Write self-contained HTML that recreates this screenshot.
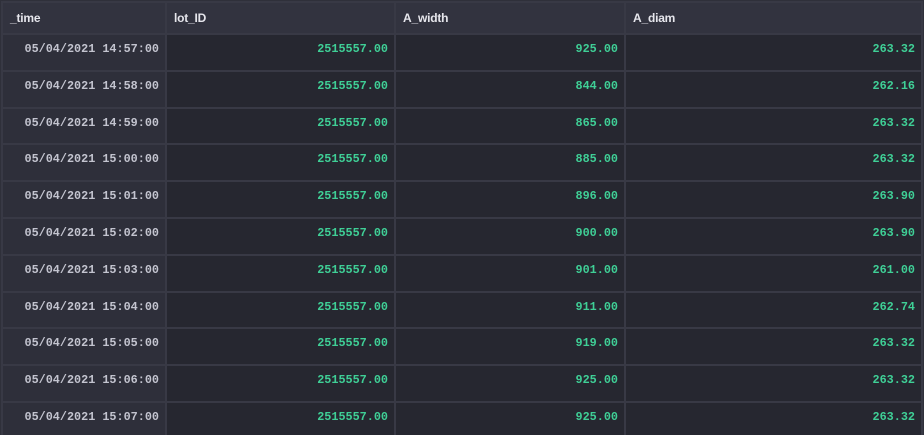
<!DOCTYPE html>
<html><head><style>
body{margin:0;background:#2f303a;width:924px;height:435px;overflow:hidden}
.w{position:absolute;left:1px;top:1px;right:1px;bottom:0;overflow:hidden}
table{border-spacing:2px;table-layout:fixed;width:922px;background:#383945}
td,th{padding:0 6px 0 7px;overflow:hidden;white-space:nowrap}
th{height:30px;background:#32333f;color:#e6e6ec;font:bold 12px "Liberation Sans",sans-serif;text-align:left;letter-spacing:-0.2px}
td{height:34.8px;vertical-align:top;padding-top:7px;box-sizing:border-box;background:#262730;font:bold 11.8px "Liberation Mono","DejaVu Sans Mono",monospace;color:#3fcf96;text-align:right}
td.t{background:#2e2f3a;color:#c3c4cf}
</style></head><body><div class="w"><table>
<colgroup><col style="width:162px"><col style="width:227px"><col style="width:228px"><col></colgroup>
<tr><th>_time</th><th>lot_ID</th><th>A_width</th><th>A_diam</th></tr>
<tr><td class="t">05/04/2021 14:57:00</td><td>2515557.00</td><td>925.00</td><td>263.32</td></tr>
<tr><td class="t">05/04/2021 14:58:00</td><td>2515557.00</td><td>844.00</td><td>262.16</td></tr>
<tr><td class="t">05/04/2021 14:59:00</td><td>2515557.00</td><td>865.00</td><td>263.32</td></tr>
<tr><td class="t">05/04/2021 15:00:00</td><td>2515557.00</td><td>885.00</td><td>263.32</td></tr>
<tr><td class="t">05/04/2021 15:01:00</td><td>2515557.00</td><td>896.00</td><td>263.90</td></tr>
<tr><td class="t">05/04/2021 15:02:00</td><td>2515557.00</td><td>900.00</td><td>263.90</td></tr>
<tr><td class="t">05/04/2021 15:03:00</td><td>2515557.00</td><td>901.00</td><td>261.00</td></tr>
<tr><td class="t">05/04/2021 15:04:00</td><td>2515557.00</td><td>911.00</td><td>262.74</td></tr>
<tr><td class="t">05/04/2021 15:05:00</td><td>2515557.00</td><td>919.00</td><td>263.32</td></tr>
<tr><td class="t">05/04/2021 15:06:00</td><td>2515557.00</td><td>925.00</td><td>263.32</td></tr>
<tr><td class="t">05/04/2021 15:07:00</td><td>2515557.00</td><td>925.00</td><td>263.32</td></tr>
</table></div></body></html>
